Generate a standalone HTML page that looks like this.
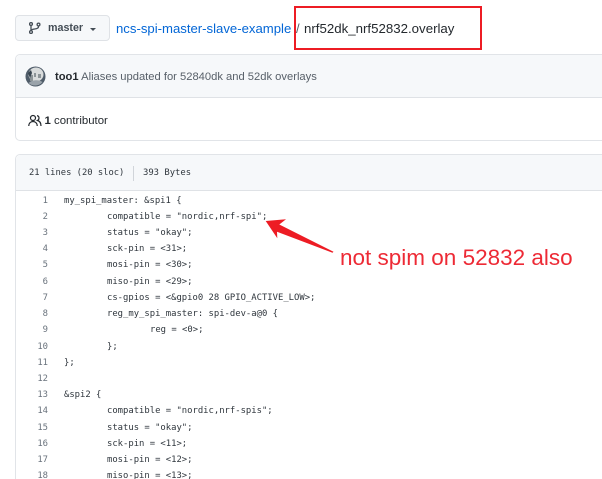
<!DOCTYPE html>
<html><head><meta charset="utf-8">
<style>
html,body{margin:0;padding:0;background:#fff;overflow:hidden}
#p{position:relative;width:602px;height:479px;overflow:hidden;background:#fff;font-family:"Liberation Sans",sans-serif;filter:blur(.35px)}
.a{position:absolute;white-space:pre}
.l{position:absolute;white-space:pre;font:8.900px/16px "DejaVu Sans Mono",monospace;color:#2f363d}
.n{position:absolute;width:30px;left:18px;text-align:right;font:8.900px/16px "DejaVu Sans Mono",monospace;color:#6a737d}
</style></head><body><div id="p">
<div class="a" style="left:15px;top:15px;width:93px;height:24px;border:1px solid #dfe2e6;border-radius:4px;background:#f6f8fa"></div>
<svg class="a" style="left:29px;top:22px" width="12" height="12" viewBox="0 0 12 12" fill="none" stroke="#444d56" stroke-width="1.3"><circle cx="2" cy="2" r="1.4"/><circle cx="2" cy="10" r="1.4"/><circle cx="9.500" cy="2.500" r="1.4"/><path d="M2 3.500v5M9.500 4v.8c0 1.700-1.800 2-3.800 2.200C4 7.200 2.300 7.500 2 8.500"/></svg>
<div class="a" style="left:48px;top:21px;font-size:10.700px;line-height:15px;font-weight:bold;color:#444d56">master</div>
<div class="a" style="left:90px;top:28px;width:0;height:0;border:3px solid transparent;border-top:3.500px solid #444d56;border-bottom:0"></div>
<div class="a" style="left:116px;top:20px;font-size:13.150px;line-height:17px;color:#0366d6">ncs-spi-master-slave-example</div>
<div class="a" style="left:296px;top:20px;font-size:13px;line-height:17px;color:#586069">/</div>
<div class="a" style="left:304px;top:20px;font-size:13.270px;line-height:17px;color:#24292e">nrf52dk_nrf52832.overlay</div>
<div class="a" style="left:294px;top:6px;width:184px;height:40px;border:2px solid #ed1c24"></div>

<div class="a" style="left:15px;top:54px;width:586px;height:85px;border:1px solid #e1e4e8;border-right:0;border-radius:5px 0 0 5px"></div>
<div class="a" style="left:16px;top:55px;width:586px;height:42px;background:#f6f8fa;border-bottom:1px solid #dfe2e6;border-radius:5px 0 0 0"></div>
<svg class="a" style="left:25px;top:66px" width="21" height="21" viewBox="0 0 21 21"><circle cx="10.500" cy="10.500" r="10" fill="#4f5c69"/><ellipse cx="11" cy="8.500" rx="7.500" ry="7" fill="#d9dcdc"/><path d="M5 9h3v6H5zM9 7h2v4H9zM13 8h3v4h-3z" fill="#8c9497"/><path d="M3.500 17c3-3 10-4 14-1-3 4-10 5-14 1z" fill="#9aa3aa"/><path d="M3 7l3-3 1 3-2 5z" fill="#37444f"/></svg>
<div class="a" style="left:55px;top:70px;font-size:11.200px;line-height:14px;color:#586069"><b style="color:#24292e;font-weight:bold">too1</b> Aliases updated for 52840dk and 52dk overlays</div>
<svg class="a" style="left:28px;top:114px" width="14" height="13" viewBox="0 0 14 13" fill="none" stroke="#24292e" stroke-width="1.200"><circle cx="5" cy="4" r="2.500"/><path d="M.8 12c0-3 2-4.500 4.200-4.500S9.200 9 9.200 12M9 1.600c1.500.3 2 1.500 2 2.400s-.5 2-1.500 2.500c2 .5 3.500 2.500 3.500 5.500"/></svg>
<div class="a" style="left:44.500px;top:114px;font-size:11.400px;line-height:14px;color:#24292e"><b>1</b> contributor</div>

<div class="a" style="left:15px;top:154px;height:325px;border:1px solid #e1e4e8;border-right:0;border-bottom:0;border-radius:5px 0 0 0;box-sizing:border-box;width:587px"></div>
<div class="a" style="left:16px;top:155px;width:586px;height:35px;background:#f6f8fa;border-bottom:1px solid #dfe2e6;border-radius:5px 0 0 0"></div>
<div class="a" style="left:29px;top:165px;font:8.800px/16px 'DejaVu Sans Mono',monospace;color:#2f363d">21 lines (20 sloc)</div>
<div class="a" style="left:133px;top:166px;width:1px;height:15px;background:#d1d5da"></div>
<div class="a" style="left:143px;top:165px;font:8.900px/16px 'DejaVu Sans Mono',monospace;color:#2f363d">393 Bytes</div>

<div class="n" style="top:193px">1</div><div class="l" style="left:64px;top:193px">my_spi_master: &amp;spi1 {</div>
<div class="n" style="top:209px">2</div><div class="l" style="left:107px;top:209px">compatible = "nordic,nrf-spi";</div>
<div class="n" style="top:225px">3</div><div class="l" style="left:107px;top:225px">status = "okay";</div>
<div class="n" style="top:241px">4</div><div class="l" style="left:107px;top:241px">sck-pin = &lt;31&gt;;</div>
<div class="n" style="top:257px">5</div><div class="l" style="left:107px;top:257px">mosi-pin = &lt;30&gt;;</div>
<div class="n" style="top:274px">6</div><div class="l" style="left:107px;top:274px">miso-pin = &lt;29&gt;;</div>
<div class="n" style="top:290px">7</div><div class="l" style="left:107px;top:290px">cs-gpios = &lt;&amp;gpio0 28 GPIO_ACTIVE_LOW&gt;;</div>
<div class="n" style="top:306px">8</div><div class="l" style="left:107px;top:306px">reg_my_spi_master: spi-dev-a@0 {</div>
<div class="n" style="top:322px">9</div><div class="l" style="left:150px;top:322px">reg = &lt;0&gt;;</div>
<div class="n" style="top:339px">10</div><div class="l" style="left:107px;top:339px">};</div>
<div class="n" style="top:355px">11</div><div class="l" style="left:64px;top:355px">};</div>
<div class="n" style="top:371px">12</div>
<div class="n" style="top:387px">13</div><div class="l" style="left:64px;top:387px">&amp;spi2 {</div>
<div class="n" style="top:403px">14</div><div class="l" style="left:107px;top:403px">compatible = "nordic,nrf-spis";</div>
<div class="n" style="top:420px">15</div><div class="l" style="left:107px;top:420px">status = "okay";</div>
<div class="n" style="top:436px">16</div><div class="l" style="left:107px;top:436px">sck-pin = &lt;11&gt;;</div>
<div class="n" style="top:452px">17</div><div class="l" style="left:107px;top:452px">mosi-pin = &lt;12&gt;;</div>
<div class="n" style="top:468px;height:11px;overflow:hidden">18</div><div class="l" style="left:107px;top:468px;height:11px;overflow:hidden">miso-pin = &lt;13&gt;;</div>

<svg class="a" style="left:0;top:0" width="602" height="479"><polygon points="265.700,221 286,219.300 279.300,224.500 333.500,251.700 332.500,252.800 277,231.700 277.300,238.300" fill="#ed1c24"/></svg>
<div class="a" style="left:340px;top:244px;font-size:22.500px;line-height:28px;color:#ed2a35">not spim on 52832 also</div>
</div></body></html>
